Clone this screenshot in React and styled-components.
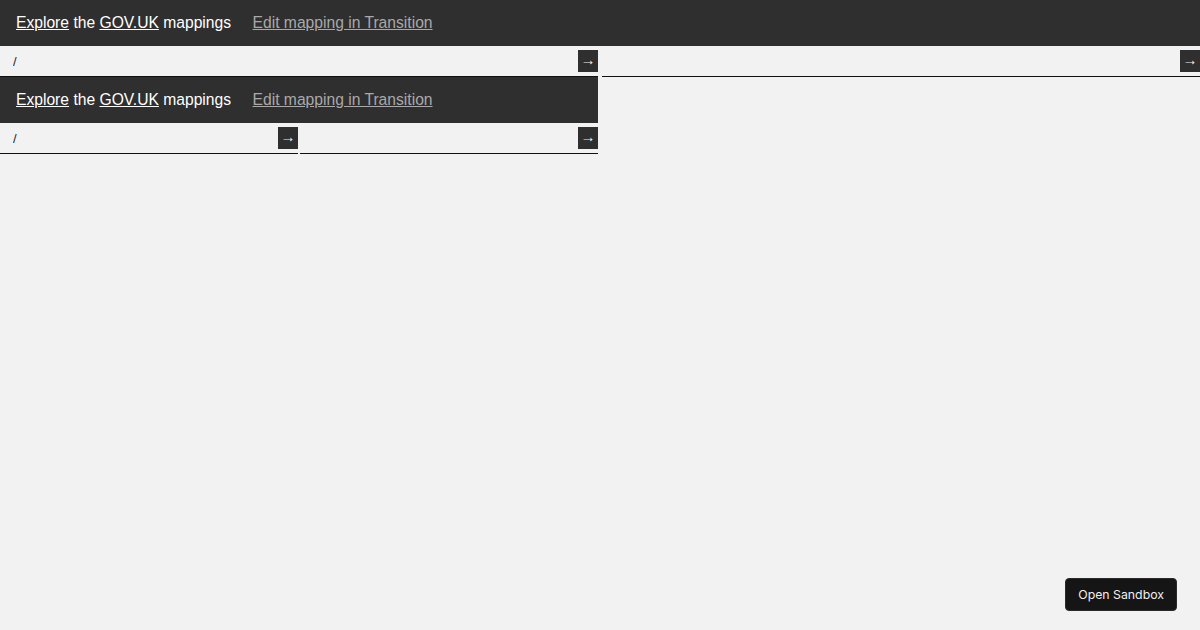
import styled, { createGlobalStyle } from "styled-components";

const GlobalStyle = createGlobalStyle`
  html, body {
    margin: 0;
    padding: 0;
    background: #f2f2f2;
    font-family: "Liberation Sans", Arial, sans-serif;
  }
`;

const Header = () => (
  <Bar>
    <Title>
      <Link href="#">Explore</Link> the <Link href="#">GOV.UK</Link> mappings
    </Title>
    <Muted href="#">Edit mapping in Transition</Muted>
  </Bar>
);

const PathInput = ({ value }) => (
  <InputRow>
    <Field defaultValue={value} />
    <Go>→</Go>
  </InputRow>
);

const Split = ({ depth }) => (
  <Row>
    <Column>
      <PathInput value="/" />
      {depth < 1 && (
        <>
          <Header />
          <Split depth={depth + 1} />
        </>
      )}
    </Column>
    <Column>
      <PathInput value="" />
    </Column>
  </Row>
);

const App = () => (
  <Page>
    <GlobalStyle />
    <Header />
    <Split depth={0} />
    <Sandbox>Open Sandbox</Sandbox>
  </Page>
);

const Page = styled.div`
  width: 1200px;
  height: 630px;
  background: #f2f2f2;
  position: relative;
  overflow: hidden;
`;

const Bar = styled.div`
  height: 46px;
  display: flex;
  align-items: center;
  gap: 21.5px;
  padding: 0 16px;
  background: #2f2f2f;
  color: #fff;
  font-size: 15.65px;
`;

const Title = styled.span`
  white-space: nowrap;
`;

const Link = styled.a`
  color: #fff;
  text-decoration: underline;
`;

const Muted = styled.a`
  color: #a9a9a9;
  text-decoration: underline;
  white-space: nowrap;
`;

const Row = styled.div`
  display: flex;
  justify-content: space-between;
  align-items: flex-start;
`;

const Column = styled.div`
  width: 49.83%;
  display: flex;
  flex-direction: column;
`;

const InputRow = styled.div`
  height: 30px;
  display: flex;
  align-items: center;
  border-bottom: 1px solid #111;
`;

const Field = styled.input`
  flex: 1;
  min-width: 0;
  border: none;
  outline: none;
  background: transparent;
  padding: 0 0 0 13px;
  font-family: "Liberation Sans", Arial, sans-serif;
  font-size: 13px;
  color: #222;
`;

const Go = styled.button`
  width: 20px;
  height: 22px;
  padding: 0 0 2px;
  border: none;
  background: #2f2f2f;
  color: #eee;
  font-family: "Liberation Sans", sans-serif;
  font-size: 15px;
  line-height: 20px;
  display: flex;
  align-items: center;
  justify-content: center;
`;

const Sandbox = styled.button`
  position: absolute;
  right: 23px;
  bottom: 19px;
  height: 33px;
  padding: 0 12px;
  border: 1px solid #2a2a2a;
  border-radius: 4px;
  background: #151515;
  color: #f0f0f0;
  font-family: Inter, "Liberation Sans", sans-serif;
  font-size: 12.3px;
`;

export default App;
